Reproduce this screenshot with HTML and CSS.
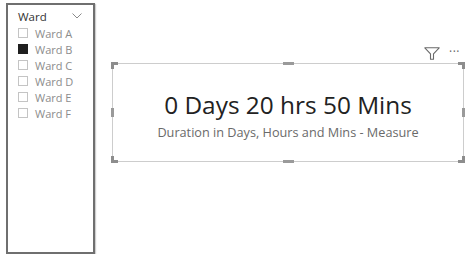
FILE: index.html
```html
<!DOCTYPE html>
<html lang="en">
<head>
  <meta charset="UTF-8">
  <title>Ward duration</title>
  <link rel="stylesheet" href="styles.css">
</head>
<body>
  <main class="canvas">
    <section class="slicer">
      <header class="slicer-head">
        <span>Ward</span>
        <svg class="chevron" width="10" height="6" viewBox="0 0 10 6"><path d="M0.5 0.5 L5 5 L9.5 0.5" fill="none" stroke="#8a8a8a" stroke-width="1"/></svg>
      </header>
      <ul class="slicer-list">
        <li><span class="box"></span>Ward A</li>
        <li><span class="box checked"></span>Ward B</li>
        <li><span class="box"></span>Ward C</li>
        <li><span class="box"></span>Ward D</li>
        <li><span class="box"></span>Ward E</li>
        <li><span class="box"></span>Ward F</li>
      </ul>
    </section>

    <section class="visual">
      <div class="visual-tools">
        <svg width="16" height="13" viewBox="0 0 16 13"><path d="M0.8 0.8 H15.2 L9.5 6.8 V12.2 H6.5 V6.8 Z" fill="none" stroke="#6a6a6a" stroke-width="1.1" stroke-linejoin="round"/></svg>
        <span class="more">···</span>
      </div>
      <div class="card">
        <span class="grip corner tl"></span>
        <span class="grip corner tr"></span>
        <span class="grip corner bl"></span>
        <span class="grip corner br"></span>
        <span class="grip edge top"></span>
        <span class="grip edge bottom"></span>
        <span class="grip side left"></span>
        <span class="grip side right"></span>
        <div class="value">0 Days 20 hrs 50 Mins</div>
        <div class="label">Duration in Days, Hours and Mins - Measure</div>
      </div>
    </section>
  </main>
</body>
</html>
```

FILE: styles.css
```css
* {
  box-sizing: border-box;
  margin: 0;
  padding: 0;
}

html,
body {
  background: white;
  font-family: "Open Sans", "DejaVu Sans", sans-serif;
}

.canvas {
  display: flex;
  align-items: flex-start;
  padding: 3px 0 0 6px;
}

/* Slicer */
.slicer {
  width: 89px;
  height: 251px;
  border: 2px solid #6f6f6f;
  box-shadow: 1px 1px 1px #cfcfcf;
  padding: 3px 10px 0 10px;
}

.slicer-head {
  display: flex;
  justify-content: space-between;
  align-items: center;
  font-size: 11.5px;
  color: #333;
  height: 16px;

  .chevron {
    margin-right: 1px;
  }
}

.slicer-list {
  list-style: none;
  margin-top: 1px;

  li {
    display: flex;
    align-items: center;
    gap: 7px;
    height: 16px;
    font-size: 11px;
    color: #8c8c8c;
  }
}

.box {
  width: 10px;
  height: 10px;
  border: 1px solid #c4c4c4;

  &.checked {
    background: #1f1f1f;
    border-color: #1f1f1f;
  }
}

/* Card visual */
.visual {
  margin-left: 17px;
  margin-top: 41px;
  width: 352px;
}

.visual-tools {
  display: flex;
  justify-content: flex-end;
  align-items: center;
  gap: 9px;
  height: 19px;
  padding-right: 4px;

  .more {
    font-size: 12px;
    letter-spacing: 0.5px;
    color: #666;
    line-height: 1;
    margin-top: -4px;
  }
}

.card {
  position: relative;
  height: 99px;
  border: 1.5px solid #cdcdcd;
  display: flex;
  flex-direction: column;
  align-items: center;
  justify-content: center;
  padding-top: 6px;
}

.value {
  font-size: 24.4px;
  color: #222;
  line-height: 30px;
}

.label {
  font-size: 12.7px;
  color: #6a6a6a;
  margin-top: 3px;
}

.grip {
  position: absolute;
  border-color: #8d8d8d;
  border-style: solid;
  border-width: 0;
}

.corner {
  width: 7px;
  height: 7px;

  &.tl { top: -2px; left: -2px; border-top-width: 3px; border-left-width: 3px; }
  &.tr { top: -2px; right: -2px; border-top-width: 3px; border-right-width: 3px; }
  &.bl { bottom: -2px; left: -2px; border-bottom-width: 3px; border-left-width: 3px; }
  &.br { bottom: -2px; right: -2px; border-bottom-width: 3px; border-right-width: 3px; }
}

.edge {
  width: 11px;
  height: 3px;
  left: calc(50% - 5px);
  background: #9a9a9a;

  &.top { top: -2px; }
  &.bottom { bottom: -2px; }
}

.side {
  width: 3px;
  height: 9px;
  top: calc(50% - 5px);
  background: #9a9a9a;

  &.left { left: -2px; }
  &.right { right: -2px; }
}
```
